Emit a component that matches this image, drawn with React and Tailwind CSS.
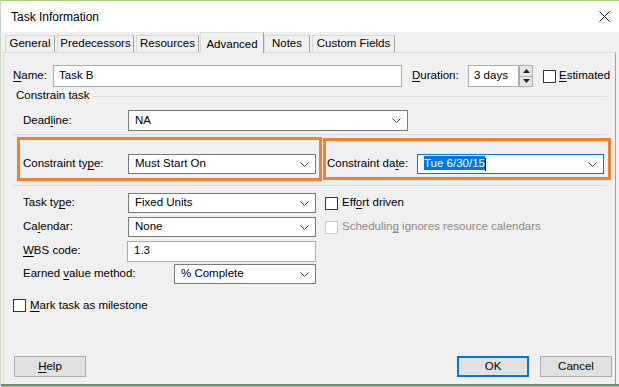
import React from "react";

// little mnemonic underline helper
const U = ({ children }) => <span className="underline underline-offset-[2px]">{children}</span>;

const Chevron = () => (
  <svg width="9" height="5" viewBox="0 0 9 5" className="shrink-0">
    <polyline points="0.5,0.5 4.5,4.5 8.5,0.5" fill="none" stroke="#404040" strokeWidth="1" />
  </svg>
);

function Select({ className = "", active = false, children }) {
  return (
    <div
      className={`flex items-center justify-between bg-white border pl-[6px] pr-[6px] ${
        active ? "border-[#0078d7]" : "border-[#7a7a7a]"
      } ${className}`}
    >
      <span className="leading-none">{children}</span>
      <Chevron />
    </div>
  );
}

function Checkbox({ disabled = false }) {
  return (
    <div
      className={`w-[13px] h-[13px] shrink-0 bg-white border ${
        disabled ? "border-[#cccccc]" : "border-[#333333]"
      }`}
    />
  );
}

function Tab({ label, width, selected }) {
  if (selected) {
    return (
      <div
        className={`${width} h-[21px] mb-[-1px] relative z-10 bg-[#f0f0f0] border-l border-t border-[#d9d9d9] border-r border-r-[#a0a0a0] flex items-start justify-center pt-[3px]`}
      >
        {label}
      </div>
    );
  }
  return (
    <div
      className={`${width} h-[17px] bg-[#f0f0f0] border-l border-t border-[#d9d9d9] border-r border-r-[#a0a0a0] flex items-center justify-center`}
    >
      {label}
    </div>
  );
}

function Button({ children, primary, className = "" }) {
  return (
    <div
      className={`w-[72px] h-[21px] flex items-center justify-center bg-[#e1e1e1] ${
        primary ? "border-2 border-[#0078d7]" : "border border-[#adadad]"
      } ${className}`}
    >
      {children}
    </div>
  );
}

export default function App() {
  return (
    <div className="w-[619px] h-[387px] overflow-hidden flex flex-col bg-[#f0f0f0] border-l border-[#c9d6bf] text-[11.5px] text-black font-['Liberation_Sans',Arial,sans-serif]">
      <div className="h-px bg-[#a6d27d] shrink-0" />

      {/* title bar */}
      <div className="h-[31px] shrink-0 bg-white flex items-center justify-between pl-[10px] pr-[9px]">
        <span className="text-[12px]">Task Information</span>
        <svg width="11" height="11" viewBox="0 0 11 11">
          <path d="M0.5 0.5 L10.5 10.5 M10.5 0.5 L0.5 10.5" stroke="#111" strokeWidth="1" />
        </svg>
      </div>

      {/* tabs */}
      <div className="h-[20px] shrink-0 flex items-end pl-[4px] gap-[2px]">
        <Tab label="General" width="w-[50px]" />
        <Tab label="Predecessors" width="w-[77px]" />
        <Tab label="Resources" width="w-[63px]" />
        <div className="ml-[-1px] mr-[-2px] flex items-end">
          <Tab label="Advanced" width="w-[64px]" selected />
        </div>
        <Tab label="Notes" width="w-[46px]" />
        <Tab label="Custom Fields" width="w-[83px]" />
      </div>

      {/* panel */}
      <div className="flex-1 ml-[2px] w-[613px] flex flex-col border-l border-t border-[#d9d9d9] border-r border-r-[#a0a0a0]">
        {/* name row */}
        <div className="mt-[12px] h-[22px] flex items-center">
          <span className="ml-[9px] w-[40px]">
            <U>N</U>ame:
          </span>
          <div className="w-[349px] h-[22px] bg-white border border-[#abadb3] flex items-center pl-[5px]">Task B</div>
          <span className="ml-[10px] w-[56px]">
            <U>D</U>uration:
          </span>
          <div className="w-[51px] h-[22px] bg-white border border-[#abadb3] flex items-center pl-[5px]">3 days</div>
          <div className="w-[14px] h-[22px] flex flex-col border border-[#adadad] bg-[#e5e5e5]">
            <div className="flex-1 flex items-center justify-center border-b border-[#adadad]">
              <svg width="7" height="4" viewBox="0 0 7 4">
                <polygon points="0,4 3.5,0 7,4" fill="#222" />
              </svg>
            </div>
            <div className="flex-1 flex items-center justify-center">
              <svg width="7" height="4" viewBox="0 0 7 4">
                <polygon points="0,0 3.5,4 7,0" fill="#222" />
              </svg>
            </div>
          </div>
          <div className="ml-[10px]">
            <Checkbox />
          </div>
          <span className="ml-[3px]">
            <U>E</U>stimated
          </span>
        </div>

        {/* constrain task group */}
        <div className="mt-[2px] h-[14px] flex items-center">
          <span className="ml-[12px]">Constrain task</span>
          <div className="flex-1 h-px bg-[#dcdcdc] ml-[3px] mr-[8px]" />
        </div>

        <div className="mt-[7px] h-[21px] flex items-center">
          <span className="ml-[19px] w-[105px]">
            Dead<U>l</U>ine:
          </span>
          <Select className="w-[280px] h-[21px]">NA</Select>
        </div>

        <div className="mt-[3px] h-px bg-[#dcdcdc] ml-[9px] mr-[8px]" />

        {/* highlighted constraint boxes */}
        <div className="mt-[2px] flex items-start">
          <div className="ml-[13px] w-[305px] h-[44px] border-[3px] border-[#f47f2b] flex items-end pb-[4px] pl-[3px]">
            <div className="flex items-center">
              <span className="w-[105px]">
                Constraint ty<U>p</U>e:
              </span>
              <Select className="w-[188px] h-[20px]">Must Start On</Select>
            </div>
          </div>
          <div className="ml-[1px] mt-[1px] w-[288px] h-[42px] border-[3px] border-[#f47f2b] flex items-end pb-[3px] pl-[1px]">
            <div className="flex items-center">
              <span className="w-[90px]">
                Constraint da<U>t</U>e:
              </span>
              <Select className="w-[187px] h-[20px]" active>
                <span className="bg-[#0078d7] text-white py-[1px]">Tue 6/30/15</span>
                <span className="inline-block w-px h-[13px] bg-black align-middle" />
              </Select>
            </div>
          </div>
        </div>

        <div className="mt-[4px] h-px bg-[#dcdcdc] ml-[9px] mr-[8px]" />

        {/* task settings */}
        <div className="mt-[7px] h-[20px] flex items-center">
          <span className="ml-[19px] w-[105px]">
            Task ty<U>p</U>e:
          </span>
          <Select className="w-[188px] h-[20px]">Fixed Units</Select>
          <div className="ml-[9px]">
            <Checkbox />
          </div>
          <span className="ml-[4px]">
            Eff<U>o</U>rt driven
          </span>
        </div>

        <div className="mt-[4px] h-[20px] flex items-center">
          <span className="ml-[19px] w-[105px]">
            Ca<U>l</U>endar:
          </span>
          <Select className="w-[188px] h-[20px]">None</Select>
          <div className="ml-[9px]">
            <Checkbox disabled />
          </div>
          <span className="ml-[4px] text-[#8a8a8a]">
            Schedulin<U>g</U> ignores resource calendars
          </span>
        </div>

        <div className="mt-[4px] h-[20px] flex items-center">
          <span className="ml-[19px] w-[104px]">
            <U>W</U>BS code:
          </span>
          <div className="w-[189px] h-[21px] bg-white border border-[#abadb3] flex items-center pl-[6px]">1.3</div>
        </div>

        <div className="mt-[3px] h-[20px] flex items-center">
          <span className="ml-[19px] w-[151px]">
            Earned <U>v</U>alue method:
          </span>
          <Select className="w-[142px] h-[20px]">% Complete</Select>
        </div>

        <div className="mt-[13px] flex items-center">
          <div className="ml-[9px]">
            <Checkbox />
          </div>
          <span className="ml-[4px]">
            <U>M</U>ark task as milestone
          </span>
        </div>

        {/* buttons */}
        <div className="mt-auto mb-[7px] flex items-center">
          <Button className="ml-[10px]">
            <span>
              <U>H</U>elp
            </span>
          </Button>
          <div className="flex-1" />
          <Button primary>OK</Button>
          <Button className="ml-[11px] mr-[3px]">Cancel</Button>
        </div>
      </div>

      <div className="h-[2px] shrink-0 bg-[#7f7f7f]" />
      <div className="h-px shrink-0 bg-[#a6d27d]" />
    </div>
  );
}
